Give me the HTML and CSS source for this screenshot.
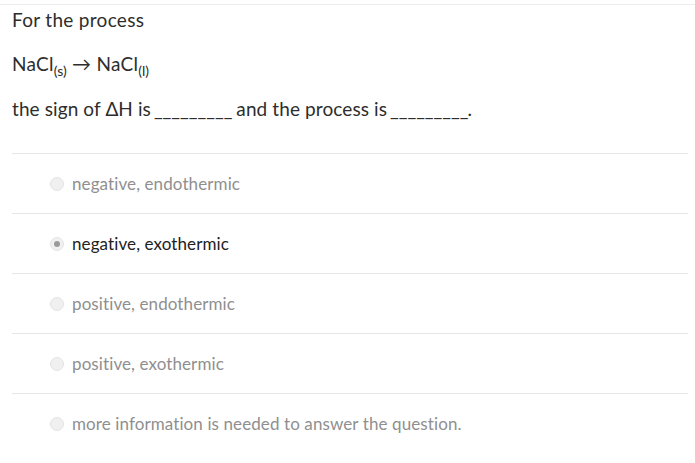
FILE: index.html
```html
<!DOCTYPE html>
<html>
<head>
<meta charset="utf-8">
<link rel="stylesheet" href="styles.css">
</head>
<body>
<div class="topline"></div>
<div class="question">
  <p class="q">For the process</p>
  <p class="q">NaCl<sub>(s)</sub> &rarr; NaCl<sub>(l)</sub></p>
  <p class="q q3">the sign of &Delta;H is <span class="blank">_________</span> and the process is <span class="blank">_________</span>.</p>
</div>
<div class="answers">
  <div class="opt"><span class="radio"></span><span class="label">negative, endothermic</span></div>
  <div class="opt selected"><span class="radio"><span class="dot"></span></span><span class="label">negative, exothermic</span></div>
  <div class="opt"><span class="radio"></span><span class="label">positive, endothermic</span></div>
  <div class="opt"><span class="radio"></span><span class="label">positive, exothermic</span></div>
  <div class="opt last"><span class="radio"></span><span class="label">more information is needed to answer the question.</span></div>
</div>
</body>
</html>
```
FILE: styles.css
```css
html, body { margin: 0; padding: 0; background: #fff; }
body { font-family: Lato, "Noto Sans", sans-serif; color: #2d2d2d; }
.topline { height: 1px; background: #ececec; margin-top: 4px; }
.question { padding: 0 12px; }
.q { margin: 0; font-size: 19px; line-height: 22px; letter-spacing: 0.3px; }
.q:nth-child(1) { padding-top: 4px; }
.q:nth-child(2) { padding-top: 22px; }
.q:nth-child(3) { padding-top: 23px; }
.q3 { letter-spacing: 0.1px; }
sub { font-size: 14px; vertical-align: -5px; line-height: 0; letter-spacing: 0; }
.blank { letter-spacing: 0; margin-left: -2px; margin-right: -1px; }
.answers { margin: 0 7px 0 12px; padding-top: 33px; }
.opt { display: flex; align-items: center; height: 59px; border-top: 1px solid #e6e6e6; padding-left: 38px; font-size: 17px; color: #8f8f8f; letter-spacing: 0.1px; }
.opt.selected { color: #222; }
.radio { width: 14px; height: 14px; border-radius: 50%; background: #f0f0f0; border: 1px solid #e4e4e4; box-sizing: border-box; margin-right: 8px; display: flex; align-items: center; justify-content: center; }
.dot { width: 6px; height: 6px; border-radius: 50%; background: #9a9a9a; }
```
